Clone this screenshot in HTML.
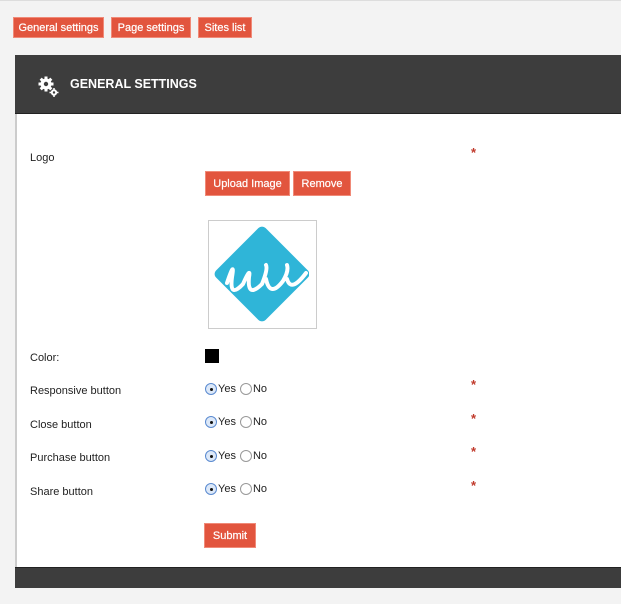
<!DOCTYPE html>
<html><head><style>
body{margin:0;width:621px;height:604px;background:#f3f3f3;font-family:"Liberation Sans",Arial,sans-serif;position:relative;overflow:hidden}
.a{position:absolute}
.btn{position:absolute;background:#e2553e;border:1px solid #f08a78;color:#fff;font-size:11px;text-align:center;box-sizing:border-box;-webkit-text-stroke:0.2px #fff}
.lbl{position:absolute;left:30px;font-size:11px;color:#222}
.star{position:absolute;left:471px;color:#c0392b;font-size:13px;font-weight:bold}
.rad{position:absolute;left:205px;font-size:11px;color:#222;display:flex;align-items:center}
.r{width:12px;height:12px;border-radius:50%;border:1px solid #999;box-sizing:border-box;background:#fff;display:inline-block;position:relative;margin-right:1px}
.r.on{border-color:#5a8ad0;background:#dce8f8}
.r.on:after{content:"";position:absolute;left:3.5px;top:3.5px;width:3px;height:3px;border-radius:50%;background:#111}
.r.off{margin-left:4px}
</style></head><body>
<div class="a" style="left:0;top:0;width:621px;height:1px;background:#ddd"></div>
<div class="btn" style="left:13px;top:17px;width:91px;height:21px;line-height:20px">General settings</div>
<div class="btn" style="left:111px;top:17px;width:80px;height:21px;line-height:20px">Page settings</div>
<div class="btn" style="left:198px;top:17px;width:54px;height:21px;line-height:20px">Sites list</div>
<div class="a" style="left:15px;top:55px;width:606px;height:58px;background:#3d3d3d;border-bottom:1px solid #222"></div>
<svg class="a" style="left:37px;top:75px" width="22" height="22" viewBox="0 0 22 22">
<g fill="#fff"><circle cx="9" cy="9" r="5.5"/><g stroke="#fff" stroke-width="3"><line x1="9" y1="1.5" x2="9" y2="16.5"/><line x1="1.5" y1="9" x2="16.5" y2="9"/><line x1="3.7" y1="3.7" x2="14.3" y2="14.3"/><line x1="14.3" y1="3.7" x2="3.7" y2="14.3"/></g></g>
<circle cx="9" cy="9" r="2.2" fill="#3d3d3d"/>
<circle cx="17" cy="17.5" r="3.2" fill="#fff"/><g stroke="#fff" stroke-width="1.5"><line x1="17" y1="13" x2="17" y2="22"/><line x1="12.5" y1="17.5" x2="21.5" y2="17.5"/></g><circle cx="17" cy="17.5" r="1.2" fill="#3d3d3d"/>
</svg>
<div class="a" style="left:70px;top:77px;color:#fff;font-weight:bold;font-size:12.5px">GENERAL SETTINGS</div>
<div class="a" style="left:15px;top:114px;width:606px;height:453px;background:#fff;border-left:2px solid #ccc;box-sizing:border-box"></div>
<div class="lbl" style="top:152px">Logo</div>
<div class="star" style="top:145px">*</div>
<div class="btn" style="left:205px;top:171px;width:85px;height:25px;line-height:24px">Upload Image</div>
<div class="btn" style="left:293px;top:171px;width:58px;height:25px;line-height:24px">Remove</div>
<div class="a" style="left:208px;top:220px;width:109px;height:109px;border:1px solid #ccc;box-sizing:border-box;overflow:hidden;background:#fff">
<svg width="107" height="107" viewBox="0 0 107 107"><rect x="18" y="18" width="70" height="70" rx="5" transform="rotate(45 53 53)" fill="#2fb5d8"/><path d="M18 62 Q26 38 23 56 Q20 78 34 63 Q42 45 40 56 Q38 78 53 63 Q59 48 57 44 M57 58 Q61 77 74 60 Q80 50 78 44 M78 58 Q82 72 97 52" fill="none" stroke="#fff" stroke-width="4" stroke-linecap="round"/><rect x="100" y="0" width="7" height="107" fill="#fff"/></svg>
</div>
<div class="lbl" style="top:352px">Color:</div>
<div class="a" style="left:205px;top:349px;width:14px;height:14px;background:#000"></div>
<div class="lbl" style="top:385px">Responsive button</div>
<div class="lbl" style="top:419px">Close button</div>
<div class="lbl" style="top:452px">Purchase button</div>
<div class="lbl" style="top:486px">Share button</div>
<div class="star" style="top:377px">*</div>
<div class="star" style="top:411px">*</div>
<div class="star" style="top:444px">*</div>
<div class="star" style="top:478px">*</div>
<div class="rad" style="top:383px"><span class="r on"></span><span>Yes</span><span class="r off"></span><span>No</span></div>
<div class="rad" style="top:416px"><span class="r on"></span><span>Yes</span><span class="r off"></span><span>No</span></div>
<div class="rad" style="top:450px"><span class="r on"></span><span>Yes</span><span class="r off"></span><span>No</span></div>
<div class="rad" style="top:483px"><span class="r on"></span><span>Yes</span><span class="r off"></span><span>No</span></div>
<div class="btn" style="left:204px;top:523px;width:52px;height:25px;line-height:24px">Submit</div>
<div class="a" style="left:15px;top:567px;width:606px;height:20px;background:#3d3d3d;border-top:1px solid #222"></div>
</body></html>
